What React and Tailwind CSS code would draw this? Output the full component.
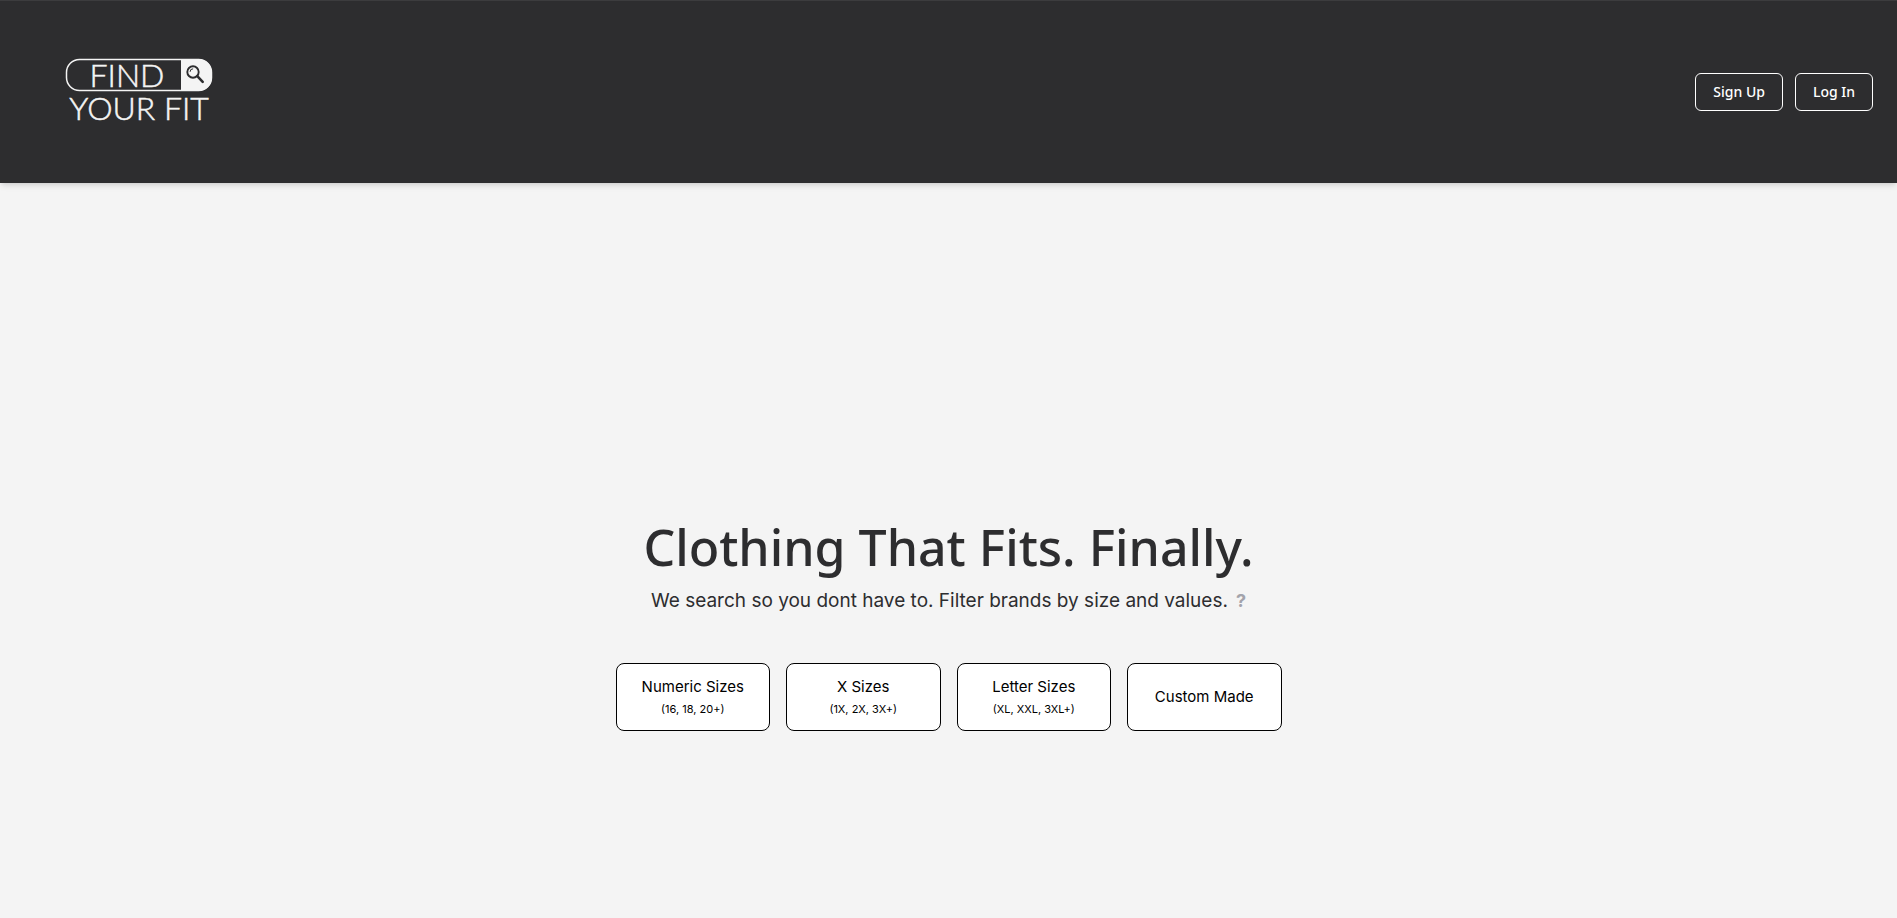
import React from 'react';

const sizeOptions = [
  { title: 'Numeric Sizes', detail: '(16, 18, 20+)' },
  { title: 'X Sizes', detail: '(1X, 2X, 3X+)' },
  { title: 'Letter Sizes', detail: '(XL, XXL, 3XL+)' },
  { title: 'Custom Made' },
];

const Logo = () => (
  <svg viewBox="0 0 200 135" className="h-[135px] w-[200px]" role="img" aria-label="Find Your Fit">
    {/* Search pill */}
    <rect x="42.5" y="35.5" width="145" height="31" rx="13" fill="none" stroke="#f4f4f4" strokeWidth="1.5" />
    <path d="M157 35h17.5a13.5 13.5 0 0 1 13.5 13.5v5a13.5 13.5 0 0 1-13.5 13.5h-17.5z" fill="#f4f4f4" />

    {/* Magnifier */}
    <circle cx="169" cy="48" r="5.7" fill="none" stroke="#2d2d2f" strokeWidth="1.9" />
    <path d="M166.1 47.8a3 3 0 0 1 3-3" fill="none" stroke="#2d2d2f" strokeWidth="1" />
    <path d="M173.3 52.2l5.4 5.6" stroke="#2d2d2f" strokeWidth="2.6" strokeLinecap="round" />

    {/* Wordmark */}
    <g className="font-['Lato',sans-serif]" fontWeight="300" fill="#f4f4f4" stroke="#f4f4f4" strokeWidth="0.5" textAnchor="middle">
      <text x="103" y="63" fontSize="32">FIND</text>
      <text x="115" y="96" fontSize="32">YOUR FIT</text>
    </g>
  </svg>
);

const Header = () => (
  <header className="flex items-center justify-between border-t border-[#3c3c3e] bg-[#2d2d2f] px-6 pt-[23px] pb-6 shadow-md">
    <a href="/">
      <Logo />
    </a>
    <nav className="flex items-center gap-3 font-['Noto_Sans',sans-serif] text-sm font-medium text-white">
      <button type="button" className="h-[38px] rounded-md border border-white px-[17px]">Sign Up</button>
      <button type="button" className="h-[38px] rounded-md border border-white px-[17px]">Log In</button>
    </nav>
  </header>
);

const App = () => {
  return (
    <div className="flex min-h-screen flex-col bg-[#f4f4f4] font-['Inter',sans-serif]">
      <Header />

      <main className="flex flex-1 flex-col items-center justify-center px-6 pt-38 text-center">
        <h1 className="font-['Noto_Sans',sans-serif] text-[50px] leading-12 font-medium text-[#2d2d2f]">
          Clothing That Fits. Finally.
        </h1>

        <p className="mt-4 flex items-center gap-2 text-[19px] leading-7 text-[#2d2d2f]">
          <span>We search so you dont have to. Filter brands by size and values.</span>
          <button type="button" aria-label="More information" className="text-lg leading-7 font-bold text-[#a3a3ab]">?</button>
        </p>

        {/* Size filters */}
        <div className="mt-12 grid w-full max-w-[666px] grid-cols-2 gap-4 sm:grid-cols-4">
          {sizeOptions.map((option) => (
            <button
              key={option.title}
              type="button"
              className="flex h-[68px] flex-col items-center justify-center rounded-lg border border-black bg-white text-black"
            >
              <span className="text-[15px] leading-6">{option.title}</span>
              {option.detail && <span className="text-[11px] leading-5">{option.detail}</span>}
            </button>
          ))}
        </div>
      </main>
    </div>
  );
};

export default App;
